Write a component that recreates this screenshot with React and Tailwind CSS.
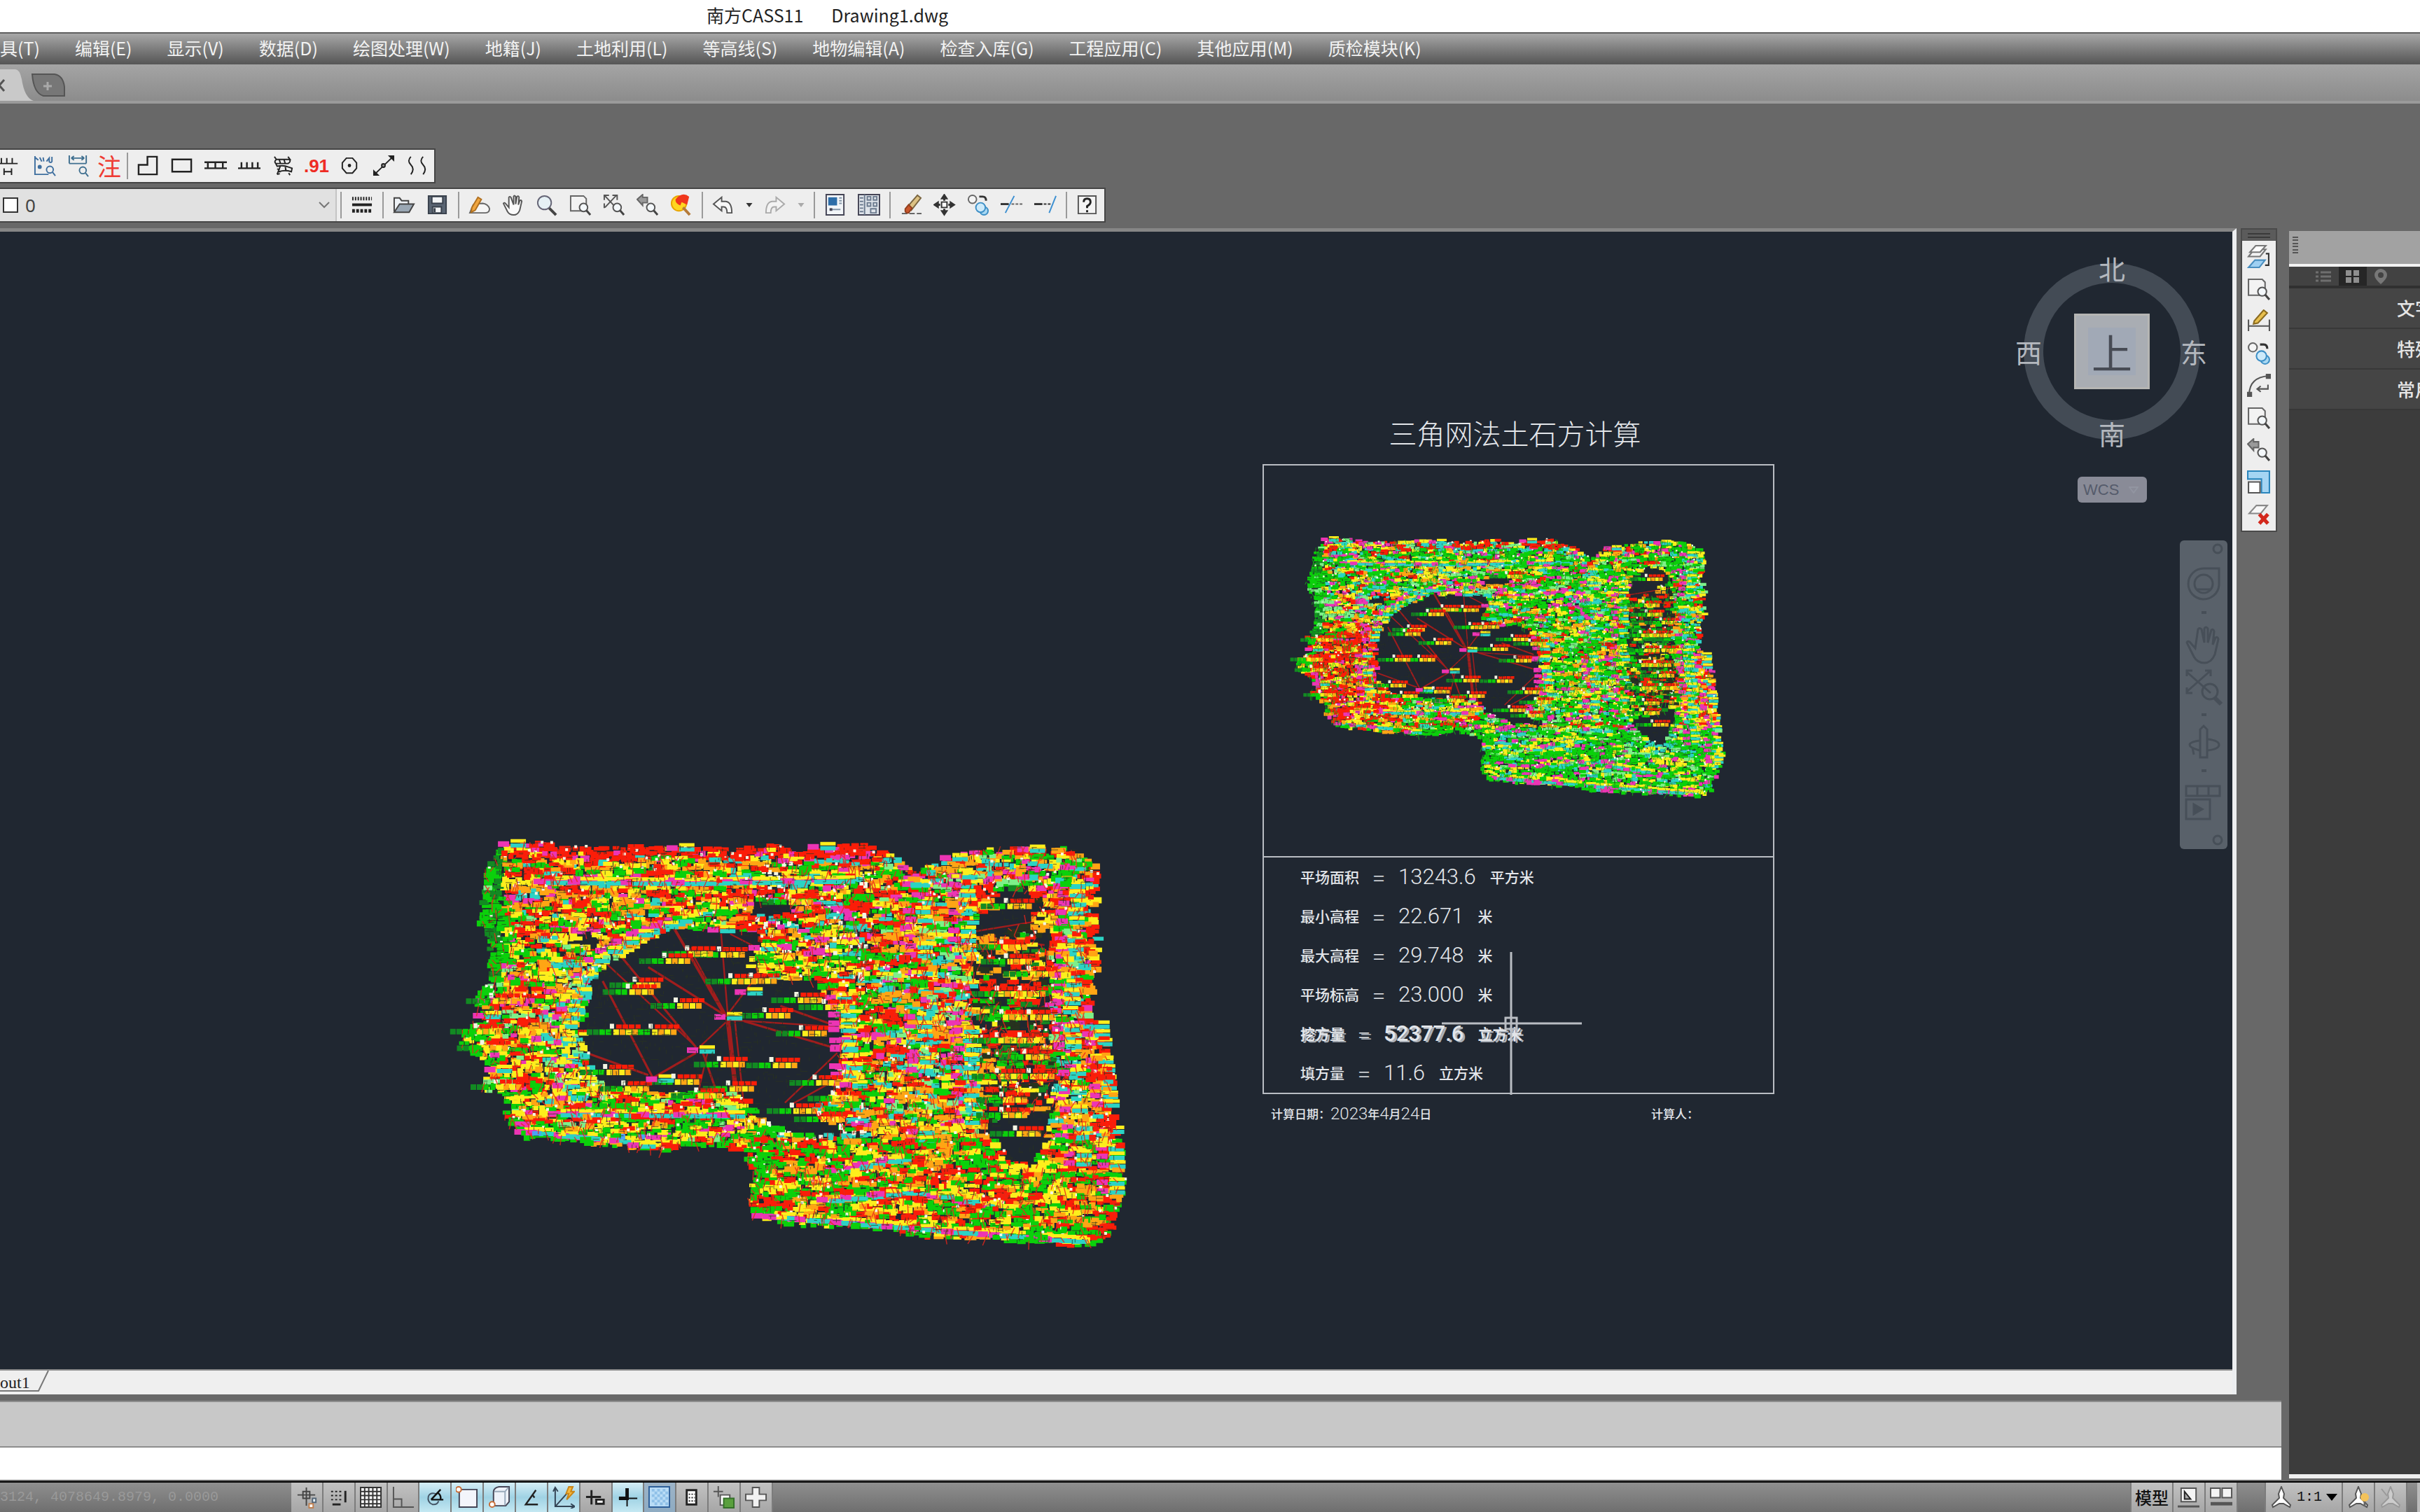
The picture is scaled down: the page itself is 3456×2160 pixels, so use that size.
import React from 'react';
import clsx from 'clsx';

const menus = [
  '具(T)', '编辑(E)', '显示(V)', '数据(D)', '绘图处理(W)', '地籍(J)', '土地利用(L)', '等高线(S)',
  '地物编辑(A)', '检查入库(G)', '工程应用(C)', '其他应用(M)', '质检模块(K)',
];

const results = [
  { label: '平场面积', value: '13243.6', unit: '平方米' },
  { label: '最小高程', value: '22.671', unit: '米' },
  { label: '最大高程', value: '29.748', unit: '米' },
  { label: '平场标高', value: '23.000', unit: '米' },
  { label: '挖方量', value: '52377.6', unit: '立方米', hot: true },
  { label: '填方量', value: '11.6', unit: '立方米' },
];

const paletteRows = ['文字', '特殊', '常用'];

/* ---------- icons, all on a 32 grid ---------- */

const Lens = ({ x = 21, y = 20, r = 6 }) => (
  <g>
    <circle cx={x} cy={y} r={r} fill="#f4f8fb" stroke="#555" strokeWidth="2" />
    <path d={`M${x + r * 0.7} ${y + r * 0.7}L31 31`} stroke="#444" strokeWidth="3" />
  </g>
);

const hand = 'M10 20L5 14q-2-2-3 0l6 12q3 5 9 5t9-7l3-13q-1-3-3-1l-2 6 1-11q-1-3-3-1l-2 11V4q-2-3-3 0v12L13 5q-2-2-3 0z';

const icons = {
  ticks: <path d="M0 13H26M2 5v8M10 5v8M18 5v8M6 20v10M17 20v10M6 25h11" />,
  chart: (
    <g stroke="#3f6f9f">
      <path d="M2 2V29H22M2 4l5 4M9 4l3 6M14 4l1 6M19 10l4-5v6M27 3v7q-2 3-4 0" />
      <circle cx="9" cy="18" r="2" fill="#3f6f9f" />
      <circle cx="24" cy="22" r="5" fill="#eee" />
      <path d="M28 26l4 5" />
    </g>
  ),
  dimension: (
    <g stroke="#3f6f8f">
      <path d="M3 1v12M28 1v12M3 13H28M6 5H25M6 5l4-3M6 5l4 3M25 5l-4-3M25 5l-4 3" />
      <circle cx="23" cy="23" r="5" fill="#eee" />
      <path d="M27 27l4 5" />
    </g>
  ),
  lshape: <path d="M15 3h14v26H2V15h13z" strokeWidth="2.5" />,
  rect: <path d="M2 7h28v18H2z" strokeWidth="2.5" />,
  ladder: <path d="M0 11h33M0 20h33M5 11v9M16 11v9M27 11v9" strokeWidth="2.5" />,
  comb: <path d="M0 20h33M5 20v-9M13 20v-9M21 20v-9M29 20v-9" strokeWidth="2.5" />,
  bank: <path d="M4 3l3 4h20l-3-4M7 7q-4 3-1 6h18q5-3 2-6M6 13l2 4q10-2 16 1l6 2-1 5q-10-3-18 0M11 7l2 6M18 7l2 6M13 16l-5 13M8 21l4 1M9 25h4M8 29l4-1M20 18l1 5M25 27l2 3" />,
  circle: (
    <g>
      <path d="M11 5h9l6 7v8l-6 7h-9l-6-7v-8z" />
      <circle cx="15.5" cy="16" r="1.5" fill="#222" />
    </g>
  ),
  line: (
    <g>
      <path d="M3 29L30 3" />
      <path d="M25 2h6v6zM2 24v6h6z" fill="#222" />
      <circle cx="16" cy="16" r="2.5" fill="#999" />
    </g>
  ),
  waves: <path d="M7 3q-6 6 0 12t0 14M25 3q-6 6 0 12t0 14" />,
  linetype: (
    <g>
      <path d="M2 7h29" strokeWidth="5" strokeDasharray="2 2" />
      <path d="M2 16h29" strokeWidth="4" />
      <path d="M2 25h29" strokeWidth="5" strokeDasharray="4 2" />
    </g>
  ),
  open: (
    <g stroke="#444">
      <path d="M2 26V6h8l3 4h10v5" fill="#eef2f6" />
      <path d="M2 27l8-12h21l-7 12z" fill="#9aa7b4" />
    </g>
  ),
  save: (
    <g stroke="#39414c">
      <path d="M3 3h26v26H3z" fill="#5a6573" />
      <path d="M8 4h16v10H8zM9 19h13v9H9z" fill="#f2f4f6" />
      <path d="M12 21v6" strokeWidth="3" />
    </g>
  ),
  pencil: (
    <g stroke="#666">
      <path d="M2 28L7 16q9-2 14-2 8 1 10 8 0 6-6 6z" fill="#f6f6f6" />
      <path d="M5 20L14 5l5 3-9 16-6 3z" fill="#f0a640" stroke="#b07020" />
    </g>
  ),
  pan: <path d={hand} fill="#fafafa" stroke="#555" />,
  zoom: (
    <g>
      <circle cx="13" cy="13" r="10" fill="#e6f1f5" stroke="#667" />
      <path d="M20 21l10 10" stroke="#444" strokeWidth="4" />
    </g>
  ),
  zoomWindow: (
    <g stroke="#666">
      <path d="M2 3h19l4 4v18H2z" fill="#f3f3f3" />
      <Lens />
    </g>
  ),
  zoomExtents: (
    <g stroke="#555">
      <path d="M3 3l15 16M20 2L3 20M2 9V2h7M14 2h7v7M2 14v7" />
      <Lens />
    </g>
  ),
  zoomPrev: (
    <g stroke="#666">
      <path d="M1 8l8-7v4h7v8H9v4z" fill="#9a9a9a" />
      <Lens />
    </g>
  ),
  zoomColor: (
    <g>
      <circle cx="13" cy="14" r="11" fill="#ffd61f" stroke="#e8a400" />
      <path d="M8 8q10-12 20-4l-3 12-8-4-2 5q-8-3-7-9z" fill="#f0371c" stroke="none" />
      <path d="M19 20l10 11" stroke="#b57b39" strokeWidth="4" />
    </g>
  ),
  undo: <path d="M2 15L14 5v6h6q9 1 9 17h-7q0-9-5-9h-3v6z" fill="#f7f7f7" stroke="#555" />,
  redo: <path d="M30 15L18 5v6h-6q-9 1-9 17h7q0-9 5-9h3v6z" fill="#f3f3f3" stroke="#aaa" />,
  props: (
    <g stroke="#445">
      <path d="M3 1h26v30H3z" fill="#f2f5f8" />
      <path d="M6 5h13v12H6z" fill="#2d6da8" stroke="none" />
      <path d="M22 6h4M22 10h4M22 14h4M8 23h16" stroke="#8597a8" />
      <path d="M10 21v4" strokeWidth="4" />
    </g>
  ),
  table: (
    <g stroke="#445">
      <path d="M1 1h31v30H1z" fill="#dfe4ea" />
      <path d="M10 1v30M3 6h5M3 11h5M3 16h5M3 21h5M3 26h5M14 4h5v5h-5zM23 4h5v5h-5zM14 13h5v5h-5zM23 13h5v5h-5zM19 22h8v6h-8z" stroke="#6b7a8e" />
    </g>
  ),
  eraser: (
    <g>
      <path d="M3 29h29" stroke="#555" strokeDasharray="8 3" />
      <path d="M13 17L26 2l5 4-14 18z" fill="#dcc183" stroke="#7a6540" />
      <path d="M8 22l5-6 5 5-5 7q-6 1-5-6z" fill="#c9562b" stroke="#93401f" />
    </g>
  ),
  move: (
    <g stroke="#333">
      <path d="M12 12h8v8h-8z" fill="#fff" />
      <path d="M16 1l4 6h-8zM16 31l4-6h-8zM1 16l6-4v8zM31 16l-6-4v8z" fill="#333" />
      <path d="M16 6v4M16 22v4M6 16h4M22 16h4" strokeWidth="3" />
    </g>
  ),
  copy: (
    <g>
      <circle cx="8" cy="8" r="6" fill="#f5f5f5" stroke="#666" />
      <path d="M18 4h5q5 0 5 6" stroke="#333" strokeWidth="3" />
      <circle cx="25" cy="25" r="6" fill="#a9d8f2" stroke="#3d8fc6" />
      <circle cx="20" cy="20" r="7" fill="#cdeafa" stroke="#3d8fc6" />
    </g>
  ),
  trim: (
    <g>
      <path d="M7 28L20 3" stroke="#3b8fd1" />
      <path d="M0 15h12" stroke="#333" strokeWidth="3" />
      <path d="M16 15h16" stroke="#666" strokeDasharray="4 2" />
    </g>
  ),
  extend: (
    <g>
      <path d="M22 28L32 3" stroke="#3b8fd1" />
      <path d="M0 15h12" stroke="#333" strokeWidth="3" />
      <path d="M14 15h12" stroke="#333" strokeDasharray="4 2" />
    </g>
  ),
  help: (
    <g stroke="#555">
      <path d="M3 3h26v26H3z" fill="#f4f4f4" />
      <path d="M11 12q0-5 5-5t5 5q0 3-5 6v3M16 24v3" stroke="#222" strokeWidth="3" />
    </g>
  ),
  layers: (
    <g stroke="#777">
      <path d="M2 16L10 6h16l-8 10z" fill="#f3f3f3" />
      <path d="M4 10L12 1h14l-8 9z" fill="#fff" />
      <path d="M2 31l9-10h14l-8 10z" fill="#9fd0f2" stroke="#4a8fc0" />
      <path d="M26 12h4v16h-5" stroke="#333" />
    </g>
  ),
  dimEdit: (
    <g>
      <path d="M2 14v16M31 14v16M2 23h29" stroke="#555" />
      <path d="M10 16L23 1l5 4-13 14-6 1z" fill="#e7bf4e" stroke="#8b6b20" />
    </g>
  ),
  arc: (
    <g stroke="#555">
      <path d="M3 29Q3 5 30 3" />
      <path d="M1 26h5v5H1zM27 1h5v5h-5z" fill="#555" />
      <path d="M29 15v6H15M19 17l-5 4 5 4" />
    </g>
  ),
  block: (
    <g>
      <path d="M1 12V1h30v30H20V12z" fill="#a5d5f3" stroke="#2b86bd" />
      <path d="M2 16h16v15H2z" fill="#fff" stroke="#555" />
    </g>
  ),
  layerDelete: (
    <g>
      <path d="M3 15L13 4h15l-9 11z" fill="#f8f8f8" stroke="#888" />
      <path d="M17 16l12 13M29 16L17 29" stroke="#d3281c" strokeWidth="5" />
    </g>
  ),
};

const statusIcons = [
  <g>
    <path d="M16 2v27M3 13h26M11 8h10v10H11z" stroke="#444" />
    <path d="M25 18h5v6h-5z" fill="#e9f4fa" stroke="#567" />
    <path d="M20 26h6v6h-6z" fill="#fff" stroke="#c08050" />
  </g>,
  <g>
    <path d="M5 8h17M5 14h17M5 20h17" strokeDasharray="3 3" />
    <path d="M7 27h12" strokeWidth="3" />
    <path d="M26 7v17" strokeWidth="3" />
  </g>,
  <g>
    <path d="M1 2h30v29H1z" fill="#fff" stroke="#333" />
    <path d="M7 2v29M13 2v29M19 2v29M25 2v29M1 8h30M1 14h30M1 20h30M1 26h30" stroke="#333" />
  </g>,
  <path d="M2 1v30h30M2 19h12v12" stroke="#555" />,
  <g>
    <path d="M20 12q-10-4-13 3-2 9 6 12 7 1 9-5" stroke="#456" />
    <path d="M11 20L25 5M11 20h18M21 10q5 3 4 10" stroke="#111" strokeWidth="2.5" />
  </g>,
  <g>
    <path d="M7 5h24v26H5V9z" fill="#f3f5fb" stroke="#445" />
    <circle cx="4" cy="5" r="4" fill="#fff" stroke="#c86b34" />
  </g>,
  <g>
    <path d="M8 8q1-6 8-7h15v22l-5 6H8z" fill="#eef2fa" stroke="#445" />
    <path d="M25 8v20M9 8h16l5-6" stroke="#9ab" />
    <circle cx="6" cy="27" r="4" fill="#fff" stroke="#c86b34" />
  </g>,
  <path d="M23 6L8 27h18M18 13l3 4" stroke="#222" strokeWidth="2.5" />,
  <g>
    <path d="M4 3v27h29M1 8l3-6 4 6M27 26l6 4-6 3M5 29L22 10" stroke="#345" />
    <path d="M24 1h6l-3 7h5L21 20l3-9h-4z" fill="#f6b83c" stroke="#c98518" />
  </g>,
  <g>
    <path d="M10 6v21M2 16h22" strokeWidth="3" />
    <path d="M17 20h11v6H17z" fill="#fff" strokeWidth="3" />
  </g>,
  <g>
    <path d="M15 3v15H3" stroke="#111" strokeWidth="5" />
    <path d="M15 3v27M3 18h27" stroke="#111" />
  </g>,
  <g>
    <path d="M1 1h30v30H1z" fill="#b9dcf6" stroke="#2d5f9a" />
    <path d="M5 6h23M5 14h23M5 22h23" stroke="#8fc0e8" strokeWidth="4" strokeDasharray="4 4" />
    <path d="M9 10h20M9 18h20M9 26h20" stroke="#8fc0e8" strokeWidth="4" strokeDasharray="4 4" />
  </g>,
  <g>
    <path d="M9 6h14v21H9z" fill="#fff" strokeWidth="3" />
    <path d="M12 12h9M12 17h9M12 22h9" strokeDasharray="2 2" />
  </g>,
  <g>
    <path d="M8 0v16M1 8h14" stroke="#555" />
    <path d="M11 13h14v15H11z" fill="#fff" stroke="#555" />
    <path d="M16 18h15v14H16z" fill="#5aa03e" stroke="#35702a" />
  </g>,
  <path d="M11 2h10v10h10v9H21v10H11V21H1v-9h10z" fill="#f1f1f1" stroke="#555" />,
];

const statusOn = [4, 5, 6, 7, 8, 10];

const Icon = ({ children, className = 'h-8 w-8' }) => (
  <svg viewBox="0 0 33 33" fill="none" stroke="#222" strokeWidth="2" className={clsx('shrink-0', className)} aria-hidden="true">
    {children}
  </svg>
);

const Tool = ({ name, className = 'w-12' }) => (
  <button aria-label={name} className={clsx('flex h-full shrink-0 items-center justify-center', className)}>
    <Icon>{icons[name]}</Icon>
  </button>
);

const Separator = () => (
  <span className="flex h-full w-3 shrink-0 justify-center py-1">
    <span className="w-[2px] bg-[#9a9a9a]" />
  </span>
);

const Caret = ({ dim }) => (
  <button aria-label="more" className="flex w-[26px] shrink-0 items-center justify-center">
    <svg viewBox="0 0 12 8" className="h-[6px] w-[10px]" aria-hidden="true">
      <path d="M0 0h12L6 8z" fill={dim ? '#aaa' : '#333'} />
    </svg>
  </button>
);

/* ---------- triangulated terrain drawing ---------- */

// survey grid is 1568 x 1568, drawn at 1020 x 620
const SX = 1020 / 1568;
const SY = 620 / 1568;

const outline = [
  [145, 60], [220, 50], [290, 75], [420, 65], [500, 65], [620, 75], [740, 60], [800, 90], [830, 68], [940, 60], [1000, 100],
  [1050, 160], [1120, 105], [1210, 75], [1370, 68], [1420, 100], [1450, 140], [1440, 300], [1450, 480], [1430, 560],
  [1435, 680], [1460, 720], [1485, 900], [1480, 1000], [1500, 1160], [1505, 1300], [1475, 1480], [1415, 1510],
  [1200, 1490], [1050, 1475], [1000, 1450], [830, 1440], [700, 1410], [680, 1350], [695, 1260], [670, 1170], [600, 1140],
  [500, 1165], [430, 1160], [190, 1115], [150, 1050], [150, 980], [95, 940], [120, 860], [60, 800], [45, 740],
  [100, 690], [80, 610], [115, 560], [110, 400], [85, 320], [115, 130],
];

const holes = [
  [[430, 430], [500, 370], [600, 365], [700, 370], [710, 420], [680, 500], [740, 540], [830, 550], [870, 640],
    [885, 740], [885, 880], [870, 960], [820, 1020], [890, 1090], [880, 1110], [770, 1090], [700, 1040], [670, 960],
    [480, 950], [370, 930], [325, 840], [315, 700], [335, 560], [380, 480]],
  [[1165, 350], [1220, 290], [1240, 220], [1290, 220], [1330, 290], [1270, 340], [1230, 390]],
  [[1200, 1080], [1280, 1040], [1350, 1020], [1340, 1100], [1310, 1215], [1250, 1200]],
  [[690, 280], [760, 255], [800, 285], [760, 310], [680, 320]],
  [[300, 385], [355, 385], [350, 430], [300, 420]],
];

// the trench on the east side has only a scatter of points
const sparse = [
  [1175, 340], [1240, 210], [1290, 210], [1340, 290], [1345, 400], [1335, 700], [1360, 800], [1350, 1000],
  [1340, 1110], [1200, 1110], [1185, 850], [1170, 700],
];

const edges = [
  [520, 350, 640, 690, 5], [630, 390, 645, 690, 3], [470, 510, 635, 680, 4], [645, 700, 665, 1000, 8], [660, 700, 680, 1010, 3],
  [640, 700, 880, 725, 3], [680, 705, 885, 805, 4], [640, 710, 575, 810, 3], [400, 450, 575, 800, 4], [380, 500, 570, 790, 3],
  [370, 560, 480, 910, 4], [575, 820, 480, 910, 4], [335, 820, 470, 900, 4], [885, 820, 770, 1000, 3], [590, 820, 620, 960, 4],
  [600, 820, 580, 960, 3], [650, 390, 720, 450, 3], [760, 650, 870, 715, 4], [670, 990, 700, 1050, 3], [640, 690, 700, 560, 3],
  [560, 440, 640, 680, 3], [900, 900, 780, 1010, 3], [1190, 400, 1340, 430, 3], [1190, 760, 1340, 650, 3],
  [1180, 830, 1370, 790, 4], [1190, 840, 1370, 870, 4], [1190, 960, 1360, 920, 3], [1190, 380, 1340, 340, 3],
];

// rows of surveyed break points: top / toe of slopes and the site edge
const breaklines = [
  [[1030, 210], [1040, 1200]],
  [[1130, 180], [1140, 1100]],
  [[1370, 150], [1355, 700], [1385, 1250]],
  [[305, 510], [255, 720], [265, 1000]],
  [[510, 340], [400, 400], [310, 500]],
  [[200, 200], [500, 205], [900, 195]],
  [[250, 1040], [640, 1045]],
  [[180, 1105], [400, 1140]],
  [[840, 1350], [1020, 1320], [1230, 1380]],
  [[840, 1250], [1020, 1190]],
  [[700, 1408], [1000, 1450], [1390, 1500]],
  [[1420, 720], [1450, 1100], [1460, 1350]],
  [[860, 620], [875, 960]],
];

// point number / elevation labels that stand clear of the dense area
const labels = [
  [450, 488], [500, 462], [570, 465], [595, 562], [640, 560], [370, 600], [385, 575], [475, 650], [335, 745], [420, 745], [670, 685],
  [750, 750], [570, 862], [685, 865], [780, 928], [470, 925], [320, 890], [590, 950], [360, 950], [730, 1030], [790, 1060],
  [820, 985], [740, 630], [800, 655], [520, 975], [720, 275], [35, 743], [50, 803], [80, 943], [70, 633],
  [1200, 290], [1190, 438], [1200, 490], [1250, 535], [1180, 607], [1230, 607],
  [1190, 692], [1250, 692], [1180, 775], [1230, 775], [1240, 835], [1180, 905], [1250, 905],
  [1190, 990], [1190, 1045], [1220, 1112],
];

const nodes = [
  [615, 690], [555, 810], [465, 915], [660, 600], [600, 375], [865, 680], [865, 735], [870, 800], [880, 870], [890, 935], [690, 440],
  [110, 880], [85, 685], [1360, 790], [1370, 890], [425, 1153], [1280, 85], [1110, 115], [820, 75], [140, 65], [510, 80],
];

const inside = (x, y, poly) => {
  let hit = false;
  for (let i = 0, j = poly.length - 1; i < poly.length; j = i++) {
    const [xi, yi] = poly[i];
    const [xj, yj] = poly[j];
    if (yi > y !== yj > y && x < ((xj - xi) * (y - yi)) / (yj - yi) + xi) hit = !hit;
  }
  return hit;
};

const makeRandom = (seed) => () => {
  seed = (seed * 1664525 + 1013904223) % 4294967296;
  return seed / 4294967296;
};

const C = {
  r: '#fb1d08', g: '#0bd00b', d: '#128a22', y: '#fdee1c', o: '#ffa514', c: '#2cd3c4', m: '#ec35b4', w: '#f4f6e4', b: '#4aa2f5', l: '#7df089', k: '#27331f',
};

// one letter per share of each colour in that part of the site
const mixFor = (x, y, green) => {
  if (x < 140 && y < 600) return 'ggdddgl';
  if (y < 105 && x < 1050) return green ? 'rrrymcl' : 'rrrrymr';
  if (inside(x, y, sparse)) return 'dgrrkkoyd';
  if (x > 220 && x < 340 && y > 380 && y < 1000) return green && y > 520 ? 'rrrroym' : 'cyygmyrlo';
  if (y > 1085 && x < 460) return green ? 'rrogyg' : 'ggyybgo';
  if (green) {
    if (y > 1120) return 'gggggclymy';
    if (x < 420 && y > 520) return 'rrrrrooymyg';
    if (x > 1420) return y > 560 ? 'roroyymrc' : 'yyclorg';
    if (x > 700) return 'gggggclymyro';
    return 'gggyyorclm';
  }
  if (y > 1120 && x > 640) return 'ggggyorrryo';
  if (x > 1430) return 'rrrrrooyyc';
  if (x > 950) return 'ggyyoorrrmclo';
  if (x > 700) return 'gggyyorrrmcw';
  if (y < 320) return 'rrrroooyyyggmc';
  return 'rrrooyyyygggglm';
};

const buildTerrain = (seed, green) => {
  const rnd = makeRandom(seed);
  const LAYERS = 10;
  const layers = Array.from({ length: LAYERS }, () => ({}));
  const put = (layer, key, x, y, w, h) => {
    const bucket = layers[layer];
    bucket[key] = (bucket[key] || '') + `M${x.toFixed(1)} ${y.toFixed(1)}h${w.toFixed(1)}v${h.toFixed(1)}h${(-w).toFixed(1)}z`;
  };

  for (let y = 48; y < 1520; y += 14) {
    let last = 'g';
    for (let x = 30; x < 1520; x += 15) {
      const px = x + (rnd() - 0.5) * 12;
      const py = y + (rnd() - 0.5) * 10;
      if (!inside(px, py, outline) || holes.some((h) => inside(px, py, h))) continue;
      if (inside(px, py, sparse) && rnd() < 0.45) continue;
      const mix = mixFor(px, py, green);
      // neighbours on a row often belong to the same label
      const key = rnd() < 0.4 && mix.includes(last) ? last : mix[Math.floor(rnd() * mix.length)];
      last = key;
      const layer = Math.floor(rnd() * (LAYERS - 2));
      const w = key === 'w' ? 6 : 7 + rnd() * 10;
      put(layer, key, px * SX, py * SY, w, 5 + rnd() * 4);
      if (rnd() < 0.12) put(layer + 1, 'w', px * SX + w * rnd(), py * SY - 2, 4, 4);
    }
  }

  const stampNode = (layer, nx, ny) => {
    const x = nx * SX;
    const y = ny * SY;
    put(layer, 'm', x, y - 4, 16, 8);
    put(layer, 'y', x + 18, y - 7, 22, 5);
    put(layer, 'c', x + 18, y - 1, 22, 6);
  };

  breaklines.forEach((line) => {
    for (let i = 1; i < line.length; i++) {
      const [x1, y1] = line[i - 1];
      const [x2, y2] = line[i];
      const count = Math.ceil(Math.hypot((x2 - x1) * SX, (y2 - y1) * SY) / 13);
      for (let s = 0; s < count; s++) {
        if (rnd() < 0.25) continue;
        const t = s / count;
        stampNode(4 + Math.floor(rnd() * 4), x1 + (x2 - x1) * t + (rnd() - 0.5) * 8, y1 + (y2 - y1) * t);
      }
    }
  });

  // gaps between the tiny characters
  let gaps = '';
  let mesh = '';
  for (let i = 0; i < 8000; i++) {
    const x = 60 + rnd() * 1450;
    const y = 50 + rnd() * 1450;
    if (!inside(x, y, outline)) continue;
    const gx = (x * SX).toFixed(1);
    const gy = (y * SY).toFixed(1);
    if (i % 5 < 3) gaps += rnd() < 0.6 ? `M${gx} ${gy}v${(3 + rnd() * 4).toFixed(1)}` : `M${gx} ${gy}h${(3 + rnd() * 9).toFixed(1)}`;
    else if (!holes.some((h) => inside(x, y, h))) mesh += `M${gx} ${gy}l${((rnd() - 0.5) * 14).toFixed(1)} ${(4 + rnd() * 12).toFixed(1)}`;
  }

  const top = LAYERS - 1;
  labels.forEach(([lx, ly]) => {
    const x = lx * SX;
    const y = ly * SY;
    for (let i = 0; i < 4; i++) put(top, i < 2 ? 'd' : 'g', x + i * 9, y - 4, 8, 8);
    for (let i = 0; i < 4; i++) put(top, i % 2 ? 'o' : 'y', x + 38 + i * 9, y - 4, 8, 8);
    for (let i = 0; i < 4; i++) put(top, 'r', x + 42 + i * 9, y - 11, 8, 6);
    put(top, 'w', x + 33, y - 12, 6, 7);
  });
  nodes.forEach(([nx, ny]) => stampNode(top, nx, ny));

  return { layers, gaps, mesh };
};

const terrains = { main: buildTerrain(7, false), inset: buildTerrain(23, true) };

const Terrain = ({ name, className }) => {
  const { layers, gaps, mesh } = terrains[name];
  return (
    <svg viewBox="0 0 1020 620" className={className} role="img" aria-label="三角网">
      <g stroke="#a01d1d">
        {edges.map(([x1, y1, x2, y2, w], i) => (
          <line key={i} x1={x1 * SX} y1={y1 * SY} x2={x2 * SX} y2={y2 * SY} strokeWidth={w * 0.8} />
        ))}
      </g>
      {layers.map((layer, i) => (
        <g key={i}>
          {Object.keys(layer).map((key) => <path key={key} d={layer[key]} fill={C[key]} />)}
        </g>
      ))}
      <path d={mesh} stroke={name === 'main' ? '#e8261a' : '#10c410'} strokeWidth="1.5" fill="none" opacity="0.8" />
      <path d={gaps} stroke="#2b3420" strokeWidth="1" fill="none" opacity="0.7" />
    </svg>
  );
};

/* ---------- window parts ---------- */

const Toolbars = () => (
  <div className="flex h-[178px] flex-col items-start gap-[6px] bg-[#686868] pt-16">
    <div className="flex h-[50px] items-center overflow-hidden border-2 border-l-0 border-[#454545] bg-[#eeeeee]">
      <div className="-ml-2 flex h-full items-center">
        <Tool name="ticks" />
        <Tool name="chart" />
        <Tool name="dimension" />
        <button className="w-10 text-[34px] leading-none text-[#ee3b33]">注</button>
        <Separator />
        {['lshape', 'rect', 'ladder', 'comb', 'bank'].map((n) => <Tool key={n} name={n} />)}
        <button className="w-12 font-['Liberation_Sans'] text-[26px] leading-none font-bold text-[#ee2b24]">.91</button>
        {['circle', 'line', 'waves'].map((n) => <Tool key={n} name={n} />)}
      </div>
    </div>
    <div className="flex h-[50px] items-center border-2 border-l-0 border-[#454545] bg-[#eeeeee]">
      <label className="relative flex h-full w-[481px] items-center border-r-2 border-[#c4c4c4] bg-[#e1e1e1] pl-1">
        <span className="h-[22px] w-[22px] border-2 border-[#333] bg-white" />
        <select aria-label="图层" className="h-full flex-1 appearance-none bg-transparent pl-[10px] font-['Noto_Sans'] text-[26px] text-[#444]">
          <option>0</option>
        </select>
        <svg viewBox="0 0 16 10" className="mr-2 h-[10px] w-4" fill="none" stroke="#777" strokeWidth="2" aria-hidden="true">
          <path d="M1 1l7 7 7-7" />
        </svg>
      </label>
      <Separator />
      <Tool name="linetype" />
      <Separator />
      <Tool name="open" />
      <Tool name="save" />
      <Separator />
      {['pencil', 'pan', 'zoom', 'zoomWindow', 'zoomExtents', 'zoomPrev', 'zoomColor'].map((n) => <Tool key={n} name={n} />)}
      <Separator />
      <Tool name="undo" />
      <Caret />
      <Tool name="redo" />
      <Caret dim />
      <Separator />
      <Tool name="props" />
      <Tool name="table" />
      <Separator />
      {['eraser', 'move', 'copy', 'trim', 'extend'].map((n) => <Tool key={n} name={n} />)}
      <Separator />
      <Tool name="help" />
    </div>
  </div>
);

const ViewCube = () => (
  <div className="absolute top-[45px] right-[46px] flex h-[252px] w-[252px] items-center justify-center rounded-full border-[28px] border-[#434b55] text-[38px] leading-none text-[#b4b8be]">
    <button className="flex h-[108px] w-[108px] items-center justify-center border-[3px] border-[#b5b5b3] bg-[#a9adb3]">
      <span className="flex h-[68px] w-[68px] items-center justify-center bg-[#a1a9b6] text-[58px] leading-none text-[#474b54]">上</span>
    </button>
    <span className="absolute -top-10">北</span>
    <span className="absolute -bottom-[38px]">南</span>
    <span className="absolute -left-[40px]">西</span>
    <span className="absolute -right-[38px]">东</span>
  </div>
);

const NavBar = () => (
  <div className="absolute top-[441px] right-[7px] flex h-[441px] w-[68px] flex-col items-center justify-between rounded-md bg-[#59616a] py-1">
    <svg viewBox="0 0 68 433" className="h-full w-full" fill="none" stroke="#474f58" strokeWidth="3" aria-hidden="true">
      <circle cx="54" cy="8" r="6" />
      <path d="M34 36h22v24a22 22 0 1 1-22-24z" />
      <circle cx="34" cy="58" r="13" />
      <path d="M25 66h18" />
      <path d="M22 150l-8-9q-3-2-4 1l10 20q5 9 15 9t15-12l5-22q-1-4-4-2l-4 10 2-19q-1-4-4-2l-5 18v-20q-3-4-5 0v20l-4-19q-3-3-5 0z" />
      <path d="M10 184l34 30M44 182L10 212M10 190v-8h8M36 182h8v8M10 206v8h8" />
      <circle cx="43" cy="212" r="11" />
      <path d="M50 221l9 9" strokeWidth="6" />
      <path d="M29 306v-40l5-5 5 5v40zM28 282q-14 2-14 6t14 8M18 292l2 10M40 280q16 2 16 8t-16 8" />
      <path d="M9 347h48v14H9zM25 347v14M41 347v14M9 366h34v28H9z" />
      <path d="M20 373v14l12-7z" fill="#474f58" />
      <circle cx="54" cy="424" r="6" />
      <path d="M31 99h7M31 245h7M31 325h7" strokeWidth="4" />
    </svg>
  </div>
);

const ResultSheet = () => (
  <section className="absolute top-[263px] left-[1803px] flex w-[731px] flex-col text-[#e3e6ea]">
    <h1 className="flex h-[69px] items-start justify-center pr-[10px] text-[40px] leading-[48px] font-light">三角网法土石方计算</h1>
    <div className="border-2 border-[#b9bdc3]">
      <div className="h-[560px] border-b-2 border-[#b9bdc3] pt-[89px] pl-[23px]">
        <Terrain name="inset" className="h-[397px] w-[653px]" />
      </div>
      <ul className="pl-[52px]">
        {results.map((row) => (
          <li
            key={row.label}
            className={clsx('flex h-[56px] items-center text-[21px]', row.hot ? 'font-bold [text-shadow:3px_2px_0_#aab0b8]' : 'font-medium')}
          >
            <span>{row.label}</span>
            <span className="ml-5 text-[30px] font-light">=</span>
            <span className={clsx("mx-5 font-['Roboto'] text-[31px]", row.hot ? 'font-medium' : 'font-light')}>{row.value}</span>
            <span>{row.unit}</span>
          </li>
        ))}
      </ul>
    </div>
    <footer className="flex h-[56px] items-center justify-between pr-[108px] pl-3 text-[17px] font-medium">
      <p className="flex items-center">
        计算日期：<span className="font-['Roboto'] text-[24px] font-light">2023</span>年
        <span className="font-['Roboto'] text-[24px] font-light">4</span>月
        <span className="font-['Roboto'] text-[24px] font-light">24</span>日
      </p>
      <p>计算人：</p>
    </footer>
  </section>
);

const Canvas = () => (
  <div className="relative flex-1 overflow-hidden bg-[#202731]">
    <Terrain name="main" className="absolute top-[849px] left-[620px] h-[620px] w-[1020px]" />
    <ResultSheet />
    <svg viewBox="0 0 200 204" className="absolute top-[1029px] left-[2059px] h-[204px] w-[200px]" fill="none" stroke="#b9bdc3" strokeWidth="3" aria-hidden="true">
      <path d="M99 0v204M0 102h200M91 94h16v16H91z" />
    </svg>
    <ViewCube />
    <button className="absolute top-[350px] right-[122px] flex h-[37px] w-[99px] items-center justify-between rounded-md bg-[#898b97] px-2 font-['Liberation_Sans'] text-[22px] text-[#555b6b]">
      WCS
      <svg viewBox="0 0 14 10" className="mr-1 h-[10px] w-[14px]" fill="none" stroke="#9295a1" strokeWidth="2" aria-hidden="true">
        <path d="M1 1h12L7 9z" />
      </svg>
    </button>
    <NavBar />
  </div>
);

const SideTools = () => (
  <aside className="ml-[6px] h-fit w-[52px] border-2 border-[#4a4a4a] bg-[#eeeeee]">
    <div className="flex h-4 flex-col items-center justify-center gap-[3px] bg-[#5b5b5b]">
      <span className="h-[2px] w-8 bg-[#3a3a3a]" />
      <span className="h-[2px] w-8 bg-[#3a3a3a]" />
    </div>
    {['layers', 'zoomWindow', 'dimEdit', 'copy', 'arc', 'zoomWindow', 'zoomPrev', 'block', 'layerDelete'].map((n, i) => (
      <button key={i} aria-label={n} className="flex h-[46px] w-full items-center justify-center">
        <Icon className="h-[34px] w-[34px]">{icons[n]}</Icon>
      </button>
    ))}
  </aside>
);

const Palette = () => (
  <aside className="mt-1 mb-1 ml-[11px] flex w-[187px] flex-col overflow-hidden border-b-[6px] border-[#efefef] bg-[#3c3c3c]">
    <div className="h-[51px] shrink-0 border-b-4 border-[#f2f2f2] bg-[#a2a2a2] pt-2 pl-[5px]">
      <div className="flex h-6 w-2 flex-col justify-between">
        {[0, 1, 2, 3, 4, 5].map((i) => <span key={i} className="h-[2px] w-full bg-[#555]" />)}
      </div>
    </div>
    <div className="flex h-[31px] shrink-0 items-center border-b-4 border-[#303030] bg-[#424242] pl-[27px]">
      <button aria-label="list" className="flex w-11 justify-center">
        <svg viewBox="0 0 22 18" className="h-[18px] w-[22px]" stroke="#6f6f6f" strokeWidth="3" aria-hidden="true">
          <path d="M0 3h4M7 3h15M0 9h4M7 9h15M0 15h4M7 15h15" />
        </svg>
      </button>
      <button aria-label="grid" className="flex h-[27px] w-10 items-center justify-center bg-[#262626]">
        <svg viewBox="0 0 20 18" className="h-[18px] w-5" fill="#8e8e8e" aria-hidden="true">
          <path d="M0 0h8v8H0zM11 0h8v8h-8zM0 10h8v8H0zM11 10h8v8h-8z" />
        </svg>
      </button>
      <button aria-label="pin" className="flex w-10 justify-center">
        <svg viewBox="0 0 18 22" className="h-[22px] w-[18px]" fill="#777" fillRule="evenodd" aria-hidden="true">
          <path d="M9 0a9 9 0 0 1 9 9q0 5-9 13Q0 14 0 9a9 9 0 0 1 9-9zm0 5a4 4 0 1 0 0 8 4 4 0 0 0 0-8z" />
        </svg>
      </button>
    </div>
    {paletteRows.map((text) => (
      <button key={text} className="h-[58px] shrink-0 border-b-2 border-[#383838] bg-[#454545] pl-[154px] text-left text-[26px] leading-none font-medium whitespace-nowrap text-[#e6e6e6]">
        {text}
      </button>
    ))}
  </aside>
);

const cell = 'flex h-full items-center justify-center border-r-2 border-[#7c7c7c] bg-linear-to-b from-[#c2c2c2] to-[#a6a6a6]';

const PersonIcon = ({ children, fill = '#fff', stroke = '#555' }) => (
  <svg viewBox="0 0 32 32" className="h-8 w-8" aria-hidden="true">
    <path d="M16 1l4 10-1 6 10 10-1 3-9-5h-6l-9 5-1-3 10-10-1-6z" fill={fill} stroke={stroke} strokeWidth="2" />
    {children}
  </svg>
);

const StatusBar = () => (
  <footer className="flex h-[44px] shrink-0 items-stretch border-t-2 border-black bg-linear-to-b from-[#8f8f8f] to-[#6f6f6f]">
    <p className="flex w-[416px] items-center overflow-hidden font-['Liberation_Mono'] text-[20px] whitespace-nowrap text-[#999]">3124, 4078649.8979, 0.0000</p>
    <div className="flex w-[688px]">
      {statusIcons.map((icon, i) => (
        <button
          key={i}
          aria-label={`mode ${i + 1}`}
          className={clsx(
            'flex h-full flex-1 items-center justify-center border-r-2 border-[#7c7c7c] bg-linear-to-b',
            statusOn.includes(i) && 'from-[#d5eef6] via-[#9fd2e4] to-[#c4e8f2]',
            i === 11 && 'from-[#9db4c8] to-[#8eabc2]',
            !statusOn.includes(i) && i !== 11 && 'from-[#c2c2c2] to-[#a6a6a6]'
          )}
        >
          <Icon>{icon}</Icon>
        </button>
      ))}
    </div>
    <div className="flex-1" />
    <button className={clsx(cell, 'w-[62px] border-l-2 text-[24px] leading-none font-medium text-[#111]')}>模型</button>
    <button aria-label="layout" className={clsx(cell, 'w-[46px]')}>
      <Icon>
        <path d="M5 3h22v20H5z" fill="#f4f4f4" stroke="#555" />
        <path d="M10 8v11h9z" fill="#aaa" />
        <path d="M0 30h32" stroke="#555" strokeWidth="3" />
      </Icon>
    </button>
    <button aria-label="views" className={clsx(cell, 'w-[46px]')}>
      <Icon>
        <path d="M1 3h14v14H1zM18 3h14v14H18z" fill="#f4f4f4" stroke="#555" />
        <path d="M1 26h32" stroke="#555" strokeWidth="5" />
      </Icon>
    </button>
    <span className="w-[38px]" />
    <button className={clsx(cell, "w-[112px] gap-[6px] border-l-2 font-['Liberation_Mono'] text-[20px] text-[#111]")}>
      <PersonIcon />
      1:1
      <svg viewBox="0 0 16 10" className="h-[10px] w-4" aria-hidden="true"><path d="M0 0h16L8 10z" /></svg>
    </button>
    <button aria-label="annotation" className={clsx(cell, 'w-[46px]')}>
      <PersonIcon><circle cx="25" cy="16" r="6" fill="#f3c25a" /><path d="M25 22v7" stroke="#666" strokeWidth="3" /></PersonIcon>
    </button>
    <button aria-label="auto scale" className={clsx(cell, 'w-[46px]')}>
      <PersonIcon fill="#ccc" stroke="#999"><path d="M3 4l8 10" stroke="#999" strokeWidth="2" /></PersonIcon>
    </button>
    <span className="w-[14px]" />
    <span className="w-[4px] bg-[#bbb]" />
  </footer>
);

export default function App() {
  return (
    <div className="flex h-screen w-full flex-col overflow-hidden bg-[#686868] font-['Noto_Sans_CJK_SC',sans-serif]">
      <header className="flex h-12 shrink-0 items-center border-b-2 border-[#5e5e5e] bg-white pb-1 pl-[1009px] text-[25px] leading-none whitespace-pre text-[#222]">
        <span>南方CASS11</span>
        <span className="ml-10">Drawing1.dwg</span>
      </header>

      <nav className="flex h-11 shrink-0 items-center gap-[50px] bg-linear-to-b from-[#a8a8a8] to-[#555] pb-[3px] text-[25px] leading-none whitespace-nowrap text-[#f2f2f2]">
        {menus.map((m) => <button key={m}>{m}</button>)}
      </nav>

      <div className="h-14 shrink-0 border-b-4 border-[#9b9b9b] bg-linear-to-b from-[#a4a4a4] to-[#8c8c8c]">
        <svg viewBox="0 0 100 52" className="h-[52px] w-[100px]" fill="none" aria-hidden="true">
          <path d="M0 7h22q6 0 9 14 4 27 17 31H0z" fill="#c9c9c9" />
          <path d="M6 22l-7 8 7 8" stroke="#555" strokeWidth="3" />
          <path d="M46 14h32q12 2 14 18v13H62q-14-4-16-31z" fill="#777" stroke="#555" strokeWidth="2" />
          <path d="M68 25v12M62 31h12" stroke="#aaa" strokeWidth="3" />
        </svg>
      </div>

      <Toolbars />

      <div className="flex min-h-0 flex-1">
        <div className="flex flex-1 flex-col">
          <div className="flex flex-1">
            <main className="flex flex-1 flex-col border-t-[5px] border-r-[6px] border-t-[#868686] border-r-[#eceef0]">
              <Canvas />
              <div className="flex h-9 shrink-0 items-stretch border-t-2 border-[#8d8d8d] bg-[#efefef]">
                <button className="font-['Liberation_Serif'] text-[24px] leading-none text-[#222]">out1</button>
                <svg viewBox="0 0 30 34" className="-ml-11 h-[34px] w-[72px]" fill="none" stroke="#777" strokeWidth="2" preserveAspectRatio="xMaxYMid" aria-hidden="true">
                  <path d="M-42 29H14L28 0" />
                </svg>
              </div>
            </main>
            <div className="w-[64px]"><SideTools /></div>
          </div>
          <div className="mt-[9px] h-[67px] shrink-0 border-t-2 border-b-2 border-[#8d8d8d] bg-[#c8c8c8]" />
          <input aria-label="命令" className="h-[46px] shrink-0 bg-white px-2 text-[24px] outline-none" />
          <div className="h-[2px] shrink-0" />
        </div>
        <Palette />
      </div>

      <StatusBar />
    </div>
  );
}
